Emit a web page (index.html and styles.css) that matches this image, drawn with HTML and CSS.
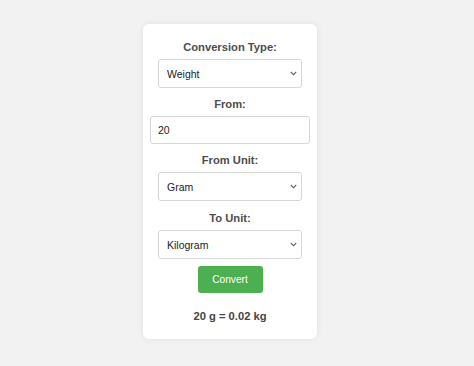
FILE: index.html
```html
<!DOCTYPE html>
<html lang="en">
<head>
<meta charset="utf-8">
<title>Unit Converter</title>
<link rel="stylesheet" href="styles.css">
</head>
<body>
<div class="page">
  <div class="card">
    <label class="label first" for="type">Conversion Type:</label>
    <div class="select-wrap">
      <select id="type" class="select"><option>Weight</option></select>
      <svg class="chev" width="7" height="5" viewBox="0 0 7 5"><path d="M0.8 1 L3.5 3.7 L6.2 1" fill="none" stroke="#666" stroke-width="1.1"/></svg>
    </div>
    <label class="label" for="from">From:</label>
    <input id="from" class="input" type="text" value="20">
    <label class="label" for="fromUnit">From Unit:</label>
    <div class="select-wrap">
      <select id="fromUnit" class="select"><option>Gram</option></select>
      <svg class="chev" width="7" height="5" viewBox="0 0 7 5"><path d="M0.8 1 L3.5 3.7 L6.2 1" fill="none" stroke="#666" stroke-width="1.1"/></svg>
    </div>
    <label class="label wide" for="toUnit">To Unit:</label>
    <div class="select-wrap">
      <select id="toUnit" class="select"><option>Kilogram</option></select>
      <svg class="chev" width="7" height="5" viewBox="0 0 7 5"><path d="M0.8 1 L3.5 3.7 L6.2 1" fill="none" stroke="#666" stroke-width="1.1"/></svg>
    </div>
    <button class="btn" type="button">Convert</button>
    <div class="result">20 g = 0.02 kg</div>
  </div>
</div>
</body>
</html>
```
FILE: styles.css
```css
* { box-sizing: border-box; }
html, body { margin: 0; padding: 0; }
body {
  background: #f2f2f2;
  font-family: "Liberation Sans", Arial, sans-serif;
  width: 474px;
  height: 366px;
  overflow: hidden;
}
.page {
  display: flex;
  justify-content: center;
  padding: 24px 14px 0 0;
}
.card {
  width: 174px;
  height: 315px;
  background: #fff;
  border-radius: 6px;
  box-shadow: 0 0 7px rgba(0, 0, 0, 0.08);
  display: flex;
  flex-direction: column;
  align-items: center;
  padding-top: 17px;
}
.label {
  display: block;
  font-size: 11.2px;
  line-height: 13px;
  font-weight: bold;
  color: #4d4d4d;
  margin: 10px 0 5px;
}
.label.first { margin-top: 0; }
.label.wide { margin-top: 11px; }
.select-wrap {
  position: relative;
  width: 144px;
  height: 29px;
}
.select {
  appearance: none;
  -webkit-appearance: none;
  width: 100%;
  height: 100%;
  border: 1px solid #d6d6d6;
  border-radius: 3px;
  background: #fff;
  padding: 0 0 0 8px;
  font-family: "Liberation Sans", Arial, sans-serif;
  font-size: 10.5px;
  color: #222;
  outline: none;
}
.chev {
  position: absolute;
  right: 5px;
  top: 12px;
}
.input {
  width: 160px;
  height: 28px;
  border: 1px solid #d6d6d6;
  border-radius: 3px;
  padding: 0 0 0 7px;
  font-family: "Liberation Sans", Arial, sans-serif;
  font-size: 10.5px;
  color: #222;
  outline: none;
}
.btn {
  margin-top: 7px;
  width: 65px;
  height: 27px;
  border: none;
  border-radius: 3px;
  background: #4caf50;
  color: #fff;
  font-family: "Liberation Sans", Arial, sans-serif;
  font-size: 10.2px;
  padding: 0;
}
.result {
  margin-top: 17px;
  font-size: 11.2px;
  line-height: 13px;
  font-weight: bold;
  color: #444;
}
```
